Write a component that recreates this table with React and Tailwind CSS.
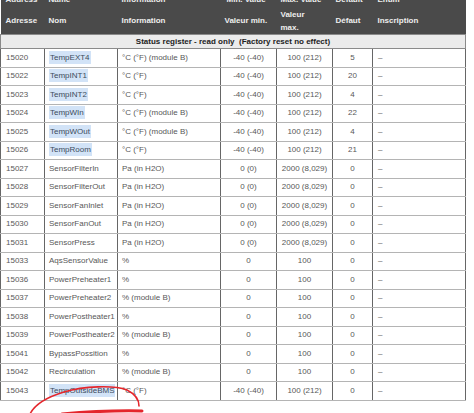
import React from 'react';

const rows = [
  ['15020', 'TempEXT4', true, '°C (°F) (module B)', '-40 (-40)', '100 (212)', '5'],
  ['15022', 'TempINT1', true, '°C (°F)', '-40 (-40)', '100 (212)', '20'],
  ['15023', 'TempINT2', true, '°C (°F)', '-40 (-40)', '100 (212)', '4'],
  ['15024', 'TempWIn', true, '°C (°F) (module B)', '-40 (-40)', '100 (212)', '22'],
  ['15025', 'TempWOut', true, '°C (°F) (module B)', '-40 (-40)', '100 (212)', '4'],
  ['15026', 'TempRoom', true, '°C (°F)', '-40 (-40)', '100 (212)', '21'],
  ['15027', 'SensorFilterIn', false, 'Pa (in H2O)', '0 (0)', '2000 (8,029)', '0'],
  ['15028', 'SensorFilterOut', false, 'Pa (in H2O)', '0 (0)', '2000 (8,029)', '0'],
  ['15029', 'SensorFanInlet', false, 'Pa (in H2O)', '0 (0)', '2000 (8,029)', '0'],
  ['15030', 'SensorFanOut', false, 'Pa (in H2O)', '0 (0)', '2000 (8,029)', '0'],
  ['15031', 'SensorPress', false, 'Pa (in H2O)', '0 (0)', '2000 (8,029)', '0'],
  ['15033', 'AqsSensorValue', false, '%', '0', '100', '0'],
  ['15036', 'PowerPreheater1', false, '%', '0', '100', '0'],
  ['15037', 'PowerPreheater2', false, '% (module B)', '0', '100', '0'],
  ['15038', 'PowerPostheater1', false, '%', '0', '100', '0'],
  ['15039', 'PowerPostheater2', false, '% (module B)', '0', '100', '0'],
  ['15041', 'BypassPossition', false, '%', '0', '100', '0'],
  ['15042', 'Recirculation', false, '% (module B)', '0', '100', '0'],
  ['15043', 'TempOutsideBMS', true, '°C (°F)', '-40 (-40)', '100 (212)', '0'],
];

const td = 'h-[18.5px] border-y border-y-[#b4b4b4] border-x border-x-[#666] p-0 align-middle';

export default function App() {
  return (
    <div className="relative w-[474px] h-[413px] overflow-hidden bg-white text-[8px] leading-none text-[#585858] font-['Liberation_Sans',Arial,sans-serif]">
      <table className="table-fixed border-collapse w-[465px] -mt-[14px]">
        <colgroup>
          <col className="w-[44px]" />
          <col className="w-[73px]" />
          <col className="w-[103px]" />
          <col className="w-[56px]" />
          <col className="w-[56px]" />
          <col className="w-[40px]" />
          <col className="w-[93px]" />
        </colgroup>
        <thead className="bg-[#4a4a4a] text-[#eeeeee] font-bold text-left">
          <tr className="h-[22px]">
            <th className="pl-[5px] align-bottom pb-[4px]">Address</th>
            <th className="pl-[4px] align-bottom pb-[4px]">Name</th>
            <th className="pl-[4px] align-bottom pb-[4px]">Information</th>
            <th className="pl-[6px] align-bottom pb-[4px]">Min. Value</th>
            <th className="pl-[4px] align-bottom pb-[4px]">Max. Value</th>
            <th className="pl-[3px] align-bottom pb-[4px]">Default</th>
            <th className="pl-[5px] align-bottom pb-[4px]">Enum</th>
          </tr>
          <tr className="h-[24px]">
            <th className="pl-[5px]">Adresse</th>
            <th className="pl-[4px]">Nom</th>
            <th className="pl-[4px]">Information</th>
            <th className="pl-[4px]">Valeur min.</th>
            <th className="pl-[4px] leading-[13px]">Valeur<br />max.</th>
            <th className="pl-[3px]">Défaut</th>
            <th className="pl-[5px]">Inscription</th>
          </tr>
        </thead>
        <tbody>
          <tr className="h-[14px]">
            <td colSpan={7} className="bg-[#ebebeb] border-y border-y-[#8a8a8a] border-x border-x-[#8a8a8a] text-center font-bold text-[#222] p-0">
              Status register - read only&nbsp; (Factory reset no effect)
            </td>
          </tr>
          {rows.map(([addr, name, hl, info, min, max, def]) => (
            <tr key={addr}>
              <td className={`${td} pl-[5px]`}>{addr}</td>
              <td className={`${td} pl-[4px]`}>
                {hl ? <span className="bg-[#d2e3f7] text-[#3c4b5c] py-[2px] px-[1px]">{name}</span> : name}
              </td>
              <td className={`${td} pl-[4px]`}>{info}</td>
              <td className={`${td} text-center`}>{min}</td>
              <td className={`${td} text-center`}>{max}</td>
              <td className={`${td} text-center`}>{def}</td>
              <td className={`${td} pl-[5px]`}>–</td>
            </tr>
          ))}
        </tbody>
      </table>
      <svg className="absolute inset-0 pointer-events-none" width="474" height="413" viewBox="0 0 474 413">
        <path d="M 30 414 C 34 406, 44 398, 64 392 C 84 386, 114 385, 127 390 C 135 394, 139 400, 139 406" fill="none" stroke="#e4262c" strokeWidth="1.6" strokeLinecap="round" />
        <path d="M 62 414 C 90 411.5, 118 410.5, 142 411" fill="none" stroke="#e4262c" strokeWidth="3" strokeLinecap="round" />
      </svg>
    </div>
  );
}
